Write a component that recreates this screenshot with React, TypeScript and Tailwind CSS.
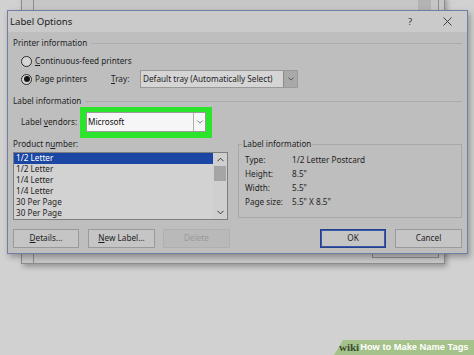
import React from "react"

const Chevron = ({ up = false, className = "" }: { up?: boolean; className?: string }) => (
  <svg viewBox="0 0 8 5" className={className} fill="none" stroke="currentColor" strokeWidth="1">
    <polyline points={up ? "0.5,4.5 4,1 7.5,4.5" : "0.5,0.5 4,4 7.5,0.5"} />
  </svg>
)

const Radio = ({ checked = false }: { checked?: boolean }) => (
  <div className="w-[11px] h-[11px] rounded-full border border-[#2a2a2a] bg-[#d6d6d6] flex items-center justify-center shrink-0">
    {checked && <div className="w-[6px] h-[6px] rounded-full bg-[#141414]" />}
  </div>
)

const Header = ({ text }: { text: string }) => (
  <div className="h-[12px] flex items-center gap-[4px]">
    <span>{text}</span>
    <div className="flex-1 h-px bg-[#acacac]" />
  </div>
)

const Button = ({
  children,
  w,
  variant = "normal",
}: {
  children: React.ReactNode
  w: string
  variant?: "normal" | "disabled" | "default"
}) => {
  const styles = {
    normal: "border-[#9a9a9a] bg-[#c5c5c5] text-[#1e1e1e]",
    disabled: "border-[#b0b0b0] bg-[#b9b9b9] text-[#9a9a9a]",
    default: "border-[#24408c] bg-[#c5c5c5] text-[#1e1e1e] shadow-[inset_0_0_0_1px_#3a5aa8]",
  }
  return (
    <div className={`${w} h-[19px] border flex items-center justify-center ${styles[variant]}`}>
      {children}
    </div>
  )
}

const products = ["1/2 Letter", "1/2 Letter", "1/4 Letter", "1/4 Letter", "30 Per Page", "30 Per Page"]

const details = [
  ["Type:", "1/2 Letter Postcard"],
  ["Height:", "8.5\""],
  ["Width:", "5.5\""],
  ["Page size:", "5.5\" X 8.5\""],
]

export default function App() {
  return (
    <div
      className="relative w-[474px] h-[355px] overflow-hidden bg-[#d1d1d1] text-[8.2px] leading-none text-[#1e1e1e]"
      style={{ fontFamily: "'Noto Sans', 'Open Sans', sans-serif" }}
    >
      {/* window behind the dialog */}
      <div className="absolute left-[21px] top-[-4px] w-[424px] h-[268px] border border-[#8c8c8c] bg-[#c6c6c6] shadow-[2px_3px_5px_rgba(0,0,0,0.28)]">
        <div className="absolute left-[11px] top-0 h-full w-px bg-[#8c8c8c]" />
        <div className="absolute left-[396px] top-0 w-[13px] h-[20px] bg-[#b3b3b3]" />
        <div className="absolute left-[416px] top-0 w-px h-[20px] bg-[#8c8c8c]" />
        <div className="absolute left-[350px] top-[240px] w-[67px] h-[21px] border border-[#8a8a8a] bg-[#c2c2c2]" />
      </div>

      {/* dialog */}
      <div className="absolute left-[7px] top-[10px] w-[461px] border border-[#6f7fa6] bg-[#bebebe] flex flex-col shadow-[2px_3px_6px_rgba(0,0,0,0.3)]">
        {/* title bar */}
        <div className="h-[21px] bg-[#cacaca] flex items-center pl-[2px] pr-[15px]">
          <span className="text-[9.6px] text-[#1a1a1a]">Label Options</span>
          <span className="ml-auto text-[9.5px] text-[#333] mr-[31px]">?</span>
          <svg viewBox="0 0 10 10" className="w-[9px] h-[9px] text-[#333]" stroke="currentColor" strokeWidth="1">
            <line x1="0.5" y1="0.5" x2="9.5" y2="9.5" />
            <line x1="9.5" y1="0.5" x2="0.5" y2="9.5" />
          </svg>
        </div>

        {/* body */}
        <div className="flex flex-col px-[5px] pt-[5px] pb-[5px]">
          <Header text="Printer information" />

          <div className="mt-[5px] h-[14px] flex items-center pl-[8px]">
            <Radio />
            <span className="ml-[3px]">
              <u>C</u>ontinuous-feed printers
            </span>
          </div>

          <div className="mt-[2px] h-[18px] flex items-center pl-[8px]">
            <Radio checked />
            <span className="ml-[3px] w-[76px]">
              Pa<u>g</u>e printers
            </span>
            <span className="w-[29px]">
              <u>T</u>ray:
            </span>
            <div className="w-[158px] h-[18px] border border-[#9a9a9a] bg-[#d5d5d5] flex items-center">
              <span className="flex-1 pl-[2px]">Default tray (Automatically Select)</span>
              <div className="w-[14px] h-full border-l border-[#8a8a8a] bg-[#a9a9a9] flex items-center justify-center text-[#3a3a3a]">
                <Chevron className="w-[6px] h-[4px]" />
              </div>
            </div>
          </div>

          <div className="mt-[7px]">
            <Header text="Label information" />
          </div>

          <div className="h-[31px] flex items-center pl-[8px]">
            <span className="w-[59px]">
              Label <u>v</u>endors:
            </span>
            <div className="w-[132px] h-[31px] bg-[#2de42d] pt-[5px] pb-[6px] px-[6px]">
              <div className="h-full bg-[#f6f6f6] border border-[#9a9a9a] flex items-center">
                <span className="flex-1 pl-[1px] text-[#111]">Microsoft</span>
                <div className="w-[12px] h-full border-l border-[#b0b0b0] flex items-center justify-center text-[#555]">
                  <Chevron className="w-[6px] h-[4px]" />
                </div>
              </div>
            </div>
          </div>

          <div className="flex gap-[10px]">
            <div className="w-[215px] flex flex-col">
              <div className="h-[12px] flex items-center">
                Product n<u>u</u>mber:
              </div>
              <div className="mt-[2px] h-[68px] border border-[#7e7e7e] bg-[#d2d2d2] flex">
                <div className="flex-1 flex flex-col">
                  {products.map((p, i) => (
                    <div
                      key={i}
                      className={`h-[11px] flex items-center pl-[2px] ${i === 0 ? "bg-[#1c46a4] text-white" : ""}`}
                    >
                      {p}
                    </div>
                  ))}
                </div>
                <div className="w-[14px] flex flex-col items-center bg-[#cfcfcf]">
                  <div className="h-[13px] flex items-center justify-center text-[#222]">
                    <Chevron up className="w-[7px] h-[5px]" />
                  </div>
                  <div className="w-[12px] h-[15px] bg-[#a5a5a5]" />
                  <div className="flex-1" />
                  <div className="h-[13px] flex items-center justify-center text-[#222]">
                    <Chevron className="w-[7px] h-[5px]" />
                  </div>
                </div>
              </div>
            </div>

            <fieldset className="w-[224px] h-[80px] border border-[#a8a8a8] flex flex-col">
              <legend className="ml-[3px] px-[1px] h-[12px] leading-[12px]">Label information</legend>
              <div className="pt-[3px] pl-[6px] flex flex-col">
                {details.map(([k, v]) => (
                  <div key={k} className="h-[14px] flex items-center">
                    <span className="w-[47px]">{k}</span>
                    <span>{v}</span>
                  </div>
                ))}
              </div>
            </fieldset>
          </div>

          <div className="mt-[9px] flex items-center">
            <Button w="w-[66px]">
              <span>
                <u>D</u>etails...
              </span>
            </Button>
            <div className="ml-[9px]">
              <Button w="w-[67px]">
                <span>
                  <u>N</u>ew Label...
                </span>
              </Button>
            </div>
            <div className="ml-[8px]">
              <Button w="w-[67px]" variant="disabled">
                Delete
              </Button>
            </div>
            <div className="ml-auto">
              <Button w="w-[66px]" variant="default">
                OK
              </Button>
            </div>
            <div className="ml-[9px]">
              <Button w="w-[67px]">Cancel</Button>
            </div>
          </div>
        </div>
      </div>

      {/* watermark */}
      <div className="absolute right-0 bottom-0 w-[140px] h-[15px] bg-[#a5c28b] [clip-path:polygon(9px_0,100%_0,100%_100%,0_100%)] flex items-center pl-[5px]">
        <span
          className="text-[11px] font-bold text-[#3d4a33]"
          style={{ fontFamily: "'Liberation Serif', serif" }}
        >
          wiki
        </span>
        <span
          className="text-[9.3px] font-bold text-white ml-[1px] whitespace-nowrap"
          style={{ fontFamily: "'Liberation Sans', sans-serif" }}
        >
          How to Make Name Tags
        </span>
      </div>
    </div>
  )
}
